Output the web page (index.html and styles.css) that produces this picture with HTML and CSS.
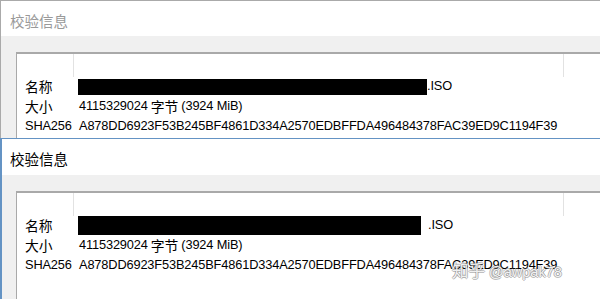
FILE: index.html
```html
<!DOCTYPE html>
<html lang="zh-CN">
<head>
<meta charset="utf-8">
<title>校验信息</title>
<link rel="stylesheet" href="styles.css">
</head>
<body>
<div class="screen">
  <section class="window inactive">
    <header class="titlebar"><span class="title">校验信息</span></header>
    <div class="body">
      <div class="panel">
        <div class="panel-head"><span class="col col-a"></span><span class="col col-b"></span></div>
        <div class="rows">
          <span class="label cjk">名称</span>
          <span class="value"><span class="redact redact-top"></span>.ISO</span>
          <span class="label cjk">大小</span>
          <span class="value">4115329024 <span class="cjk">字节</span> (3924 MiB)</span>
          <span class="label">SHA256</span>
          <span class="value">A878DD6923F53B245BF4861D334A2570EDBFFDA496484378FAC39ED9C1194F39</span>
        </div>
      </div>
    </div>
  </section>
  <section class="window active">
    <header class="titlebar"><span class="title">校验信息</span></header>
    <div class="body">
      <div class="panel">
        <div class="panel-head"><span class="col col-a"></span><span class="col col-b"></span></div>
        <div class="rows">
          <span class="label cjk">名称</span>
          <span class="value"><span class="redact redact-bottom"></span>.ISO</span>
          <span class="label cjk">大小</span>
          <span class="value">4115329024 <span class="cjk">字节</span> (3924 MiB)</span>
          <span class="label">SHA256</span>
          <span class="value">A878DD6923F53B245BF4861D334A2570EDBFFDA496484378FAC39ED9C1194F39</span>
        </div>
      </div>
    </div>
  </section>
  <div class="watermark"><span class="wm-cjk">知乎</span> @awpak78</div>
</div>
</body>
</html>
```
FILE: styles.css
```css
* { box-sizing: border-box; }
html, body { margin: 0; padding: 0; background: #ffffff; }
body {
  font-family: "Liberation Sans", "Noto Sans CJK SC", sans-serif;
  font-size: 12.8px;
  letter-spacing: -0.15px;
  color: #000;
}
.screen {
  position: relative;
  width: 600px;
  height: 299px;
  overflow: hidden;
  display: flex;
  flex-direction: column;
}
.window {
  display: flex;
  flex-direction: column;
  border-top: 1px solid #aaaaaa;
  border-left: 1px solid #aaaaaa;
  background: #f0f0f0;
  overflow: hidden;
}
.window.inactive { height: 138px; flex: none; }
.window.active {
  flex: 1;
  border-top-color: #6493c4;
  border-left: 2px solid #6493c4;
}
.titlebar {
  height: 36px;
  flex: none;
  background: #ffffff;
  display: flex;
  align-items: center;
  padding: 3px 0 0 9px;
}
.inactive .titlebar { height: 35px; }
.active .titlebar { padding-left: 8px; }
.title {
  font-family: "Noto Sans CJK SC", sans-serif;
  font-size: 14.5px;
  letter-spacing: 0;
  color: #000;
}
.inactive .title { color: #999999; }
.body {
  flex: 1;
  display: flex;
  padding: 16px 0 0 15px;
}
.active .body { padding-left: 14px; }
.panel {
  flex: 1;
  background: #ffffff;
  border-top: 2px solid #a9a9a9;
  border-left: 1px solid #a9a9a9;
  display: flex;
  flex-direction: column;
}
.panel-head {
  height: 22px;
  display: flex;
  flex: none;
}
.col {
  height: 23px;
  border-right: 1px solid #e2e2e2;
}
.col-a { width: 57px; }
.col-b { width: 490px; }
.rows {
  display: grid;
  grid-template-columns: 54px 1fr;
  grid-auto-rows: 20px;
  line-height: 20px;
  padding-left: 8px;
  white-space: nowrap;
}
.cjk {
  font-family: "Noto Sans CJK SC", sans-serif;
  font-size: 13.8px;
  letter-spacing: 0;
}
.value { display: flex; align-items: flex-start; }
.value .cjk { margin: 0 3px; }
.redact {
  display: inline-block;
  background: #000;
  flex: none;
}
.redact-top { width: 349px; height: 16px; margin: 3px 0 0 -1px; }
.redact-bottom { width: 343px; height: 19px; margin: 1px 7px 0 -1px; }
.watermark {
  position: absolute;
  left: 452px;
  top: 258px;
  font-size: 14.5px;
  letter-spacing: 0;
  color: rgba(255, 255, 255, 0.9);
  text-shadow: 1px 0 0 rgba(110, 110, 110, 0.45), -1px 0 0 rgba(110, 110, 110, 0.45),
    0 1px 0 rgba(110, 110, 110, 0.45), 0 -1px 0 rgba(110, 110, 110, 0.45);
  white-space: nowrap;
}
.wm-cjk {
  font-family: "Noto Sans CJK SC", sans-serif;
  font-size: 16.5px;
}
```
